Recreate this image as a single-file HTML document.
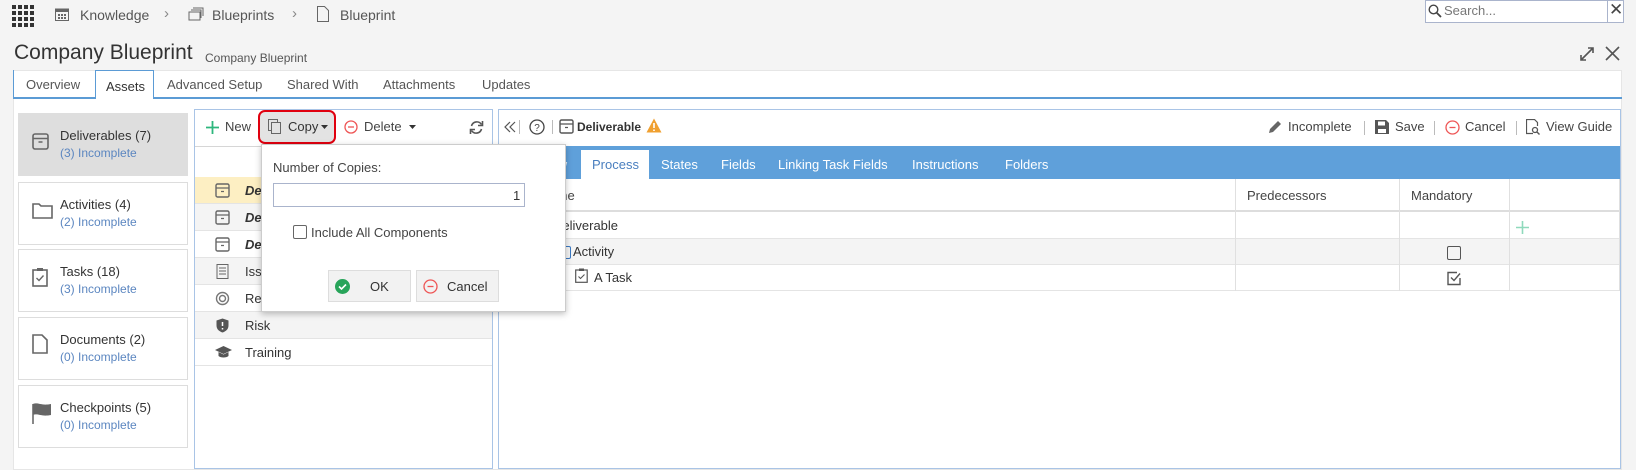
<!DOCTYPE html>
<html><head><meta charset="utf-8"><style>
*{box-sizing:border-box;margin:0;padding:0}
body{width:1636px;height:462px;overflow:hidden;background:#f4f4f4;font-family:"Liberation Sans",sans-serif;font-size:13px;color:#333;position:relative}
.a{position:absolute;white-space:nowrap}
.card{position:absolute;left:18px;width:170px;height:63px;background:#fff;border:1px solid #ddd}
.card .t{position:absolute;left:41px;top:14px;font-size:13px;color:#333}
.card .s{position:absolute;left:41px;top:32px;font-size:12px;color:#5b86c0}
.card svg{position:absolute;left:13px;top:19px}
.row{position:absolute;left:195px;width:297px;height:27px;border-bottom:1px solid #e4e4e4}
.row span{position:absolute;left:50px;top:6px}
.row svg{position:absolute;left:20px;top:6px}
.trow{position:absolute;left:499px;width:1120px;border-bottom:1px solid #e4e4e4}
.vl{position:absolute;width:1px;background:#e0e0e0}
.sep{position:absolute;width:1px;height:14px;background:#bbb}
</style></head><body>
<svg class="a" style="left:12px;top:5px" width="22" height="22"><g fill="#333"><rect x="0" y="0" width="4" height="4"/><rect x="6" y="0" width="4" height="4"/><rect x="12" y="0" width="4" height="4"/><rect x="18" y="0" width="4" height="4"/><rect x="0" y="6" width="4" height="4"/><rect x="6" y="6" width="4" height="4"/><rect x="12" y="6" width="4" height="4"/><rect x="18" y="6" width="4" height="4"/><rect x="0" y="12" width="4" height="4"/><rect x="6" y="12" width="4" height="4"/><rect x="12" y="12" width="4" height="4"/><rect x="18" y="12" width="4" height="4"/><rect x="0" y="18" width="4" height="4"/><rect x="6" y="18" width="4" height="4"/><rect x="12" y="18" width="4" height="4"/><rect x="18" y="18" width="4" height="4"/></g></svg>
<svg class="a" style="left:55px;top:7px" width="14" height="14"><rect x="0.5" y="2" width="13" height="11.5" fill="none" stroke="#666"/><rect x="0.5" y="2" width="13" height="3" fill="#666"/><g fill="#666"><rect x="3" y="7" width="2" height="2"/><rect x="6" y="7" width="2" height="2"/><rect x="9" y="7" width="2" height="2"/><rect x="3" y="10" width="2" height="2"/><rect x="6" y="10" width="2" height="2"/><rect x="9" y="10" width="2" height="2"/></g></svg>
<div class="a" style="left:80px;top:7px;font-size:14px;color:#555">Knowledge</div>
<div class="a" style="left:164px;top:5px;font-size:15px;color:#888">›</div>
<svg class="a" style="left:188px;top:7px" width="16" height="14"><path d="M1 5h11v8H1z M3 3h10v8 M5 1h10v8" fill="none" stroke="#666"/></svg>
<div class="a" style="left:212px;top:7px;font-size:14px;color:#555">Blueprints</div>
<div class="a" style="left:292px;top:5px;font-size:15px;color:#888">›</div>
<svg class="a" style="left:317px;top:6px" width="12" height="16"><path d="M0.5 0.5h7l4 4v11h-11z" fill="none" stroke="#666"/></svg>
<div class="a" style="left:340px;top:7px;font-size:14px;color:#555">Blueprint</div>
<div class="a" style="left:1425px;top:0;width:199px;height:23px;background:#fff;border:1px solid #aab4cc"></div>
<svg class="a" style="left:1428px;top:4px" width="14" height="14"><circle cx="5.5" cy="5.5" r="4.3" fill="none" stroke="#444" stroke-width="1.4"/><path d="M8.7 8.7l4.3 4.3" stroke="#444" stroke-width="1.8"/></svg>
<div class="a" style="left:1444px;top:3px;font-size:13px;color:#777">Search...</div>
<div class="a" style="left:1607px;top:0;width:1px;height:23px;background:#aab4cc"></div>
<div class="a" style="left:1609px;top:0px;font-size:17px;color:#444">✕</div>
<div class="a" style="left:14px;top:41px;font-size:21px;color:#333">Company Blueprint</div>
<div class="a" style="left:205px;top:51px;font-size:12px;color:#555">Company Blueprint</div>
<svg class="a" style="left:1579px;top:46px" width="16" height="16"><path d="M2 14L14 2M9 2h5v5M2 9v5h5" fill="none" stroke="#555" stroke-width="1.6"/></svg>
<svg class="a" style="left:1605px;top:46px" width="15" height="15"><path d="M1 1l13 13M14 1L1 14" stroke="#555" stroke-width="1.6"/></svg>
<div class="a" style="left:13px;top:70px;width:1609px;height:400px;background:#fff;border:1px solid #e6e6e6"></div>
<div class="a" style="left:13px;top:97px;width:1609px;height:1.5px;background:#5b9bd5"></div>
<div class="a" style="left:95px;top:70px;width:59px;height:29px;background:#fff;border:1.5px solid #5b9bd5;border-bottom:none"></div>
<div class="a" style="left:13px;top:70px;width:1px;height:28px;background:#5b9bd5"></div>
<div class="a" style="left:26px;top:77px;font-size:13px;color:#555">Overview</div>
<div class="a" style="left:106px;top:79px;font-size:13px;color:#333">Assets</div>
<div class="a" style="left:167px;top:77px;font-size:13px;color:#555">Advanced Setup</div>
<div class="a" style="left:287px;top:77px;font-size:13px;color:#555">Shared With</div>
<div class="a" style="left:383px;top:77px;font-size:13px;color:#555">Attachments</div>
<div class="a" style="left:482px;top:77px;font-size:13px;color:#555">Updates</div>
<div class="card" style="top:113px;background:#dedede;border-color:#dedede"><svg width="17" height="17"><rect x="1" y="1" width="15" height="15" rx="2" fill="none" stroke="#666" stroke-width="1.6"/><path d="M1 5.5h15M6.5 9h4" stroke="#666" stroke-width="1.5"/></svg><div class="t">Deliverables (7)</div><div class="s">(3) Incomplete</div></div>
<div class="card" style="top:182px"><svg width="21" height="17"><path d="M1 2h6l2 2h11v12H1z" fill="none" stroke="#666" stroke-width="1.6"/></svg><div class="t">Activities (4)</div><div class="s">(2) Incomplete</div></div>
<div class="card" style="top:249px"><svg width="16" height="20" style="top:17px"><rect x="1" y="3" width="14" height="16" fill="none" stroke="#666" stroke-width="1.6"/><rect x="5" y="1" width="6" height="3" fill="#666"/><path d="M4.5 11l2.5 2.5 4.5-5" fill="none" stroke="#666" stroke-width="1.4"/></svg><div class="t">Tasks (18)</div><div class="s">(3) Incomplete</div></div>
<div class="card" style="top:317px"><svg width="16" height="20" style="top:16px"><path d="M1 1h9l5 5v13H1z" fill="none" stroke="#666" stroke-width="1.6"/></svg><div class="t">Documents (2)</div><div class="s">(0) Incomplete</div></div>
<div class="card" style="top:385px"><svg width="20" height="21" style="top:17px"><path d="M1 1v20" stroke="#555" stroke-width="1.4"/><path d="M1 1c5-2 8 2 18 0v11c-10 2-13-2-18 0z" fill="#666"/></svg><div class="t">Checkpoints (5)</div><div class="s">(0) Incomplete</div></div>
<div class="a" style="left:194px;top:109px;width:299px;height:360px;border:1px solid #a9c4e6;background:#fff"></div>
<div class="a" style="left:195px;top:146px;width:297px;height:1px;background:#d6d6d6"></div>
<svg class="a" style="left:206px;top:121px" width="13" height="13"><path d="M6.5 0v13M0 6.5h13" stroke="#2eb67d" stroke-width="1.8"/></svg>
<div class="a" style="left:225px;top:119px;color:#444">New</div>
<div class="a" style="left:258px;top:110px;width:78px;height:34px;background:#e3e3e3;border:2px solid #e0000f;border-radius:7px"></div>
<svg class="a" style="left:268px;top:119px" width="13" height="15"><rect x="0.5" y="0.5" width="9" height="11" fill="none" stroke="#666"/><rect x="3.5" y="3.5" width="9" height="11" fill="#e3e3e3" stroke="#666"/></svg>
<div class="a" style="left:288px;top:119px;color:#333">Copy</div>
<svg class="a" style="left:321px;top:125px" width="7" height="4"><path d="M0 0h7L3.5 4z" fill="#333"/></svg>
<svg class="a" style="left:344px;top:120px" width="14" height="14"><circle cx="7" cy="7" r="6" fill="none" stroke="#e55" stroke-width="1.3"/><path d="M4 7h6" stroke="#e55" stroke-width="1.3"/></svg>
<div class="a" style="left:364px;top:119px;color:#444">Delete</div>
<svg class="a" style="left:409px;top:125px" width="7" height="4"><path d="M0 0h7L3.5 4z" fill="#333"/></svg>
<svg class="a" style="left:469px;top:120px" width="15" height="15"><path d="M2.5 6A5.5 5.5 0 0 1 12.5 4.5M12.5 9A5.5 5.5 0 0 1 2.5 10.5" fill="none" stroke="#555" stroke-width="1.6"/><path d="M13.5 1v4.5H9M1.5 14V9.5H6" fill="none" stroke="#555" stroke-width="1.6"/></svg>
<div class="row" style="top:177px;background:#fdefc3"><svg width="15" height="15"><rect x="1" y="1" width="13" height="13" rx="1.5" fill="none" stroke="#666" stroke-width="1.4"/><path d="M1 5h13M6 8.5h3" stroke="#666" stroke-width="1.3"/></svg><span style="font-style:italic;font-weight:bold">Deliverable</span></div>
<div class="row" style="top:204px;background:#f4f4f4"><svg width="15" height="15"><rect x="1" y="1" width="13" height="13" rx="1.5" fill="none" stroke="#666" stroke-width="1.4"/><path d="M1 5h13M6 8.5h3" stroke="#666" stroke-width="1.3"/></svg><span style="font-style:italic;font-weight:bold">Deliverable</span></div>
<div class="row" style="top:231px"><svg width="15" height="15"><rect x="1" y="1" width="13" height="13" rx="1.5" fill="none" stroke="#666" stroke-width="1.4"/><path d="M1 5h13M6 8.5h3" stroke="#666" stroke-width="1.3"/></svg><span style="font-style:italic;font-weight:bold">Deliverable</span></div>
<div class="row" style="top:258px;background:#f4f4f4"><svg width="15" height="15"><rect x="2" y="0.5" width="11" height="14" fill="none" stroke="#666"/><path d="M4 4h7M4 7h7M4 10h7" stroke="#666"/></svg><span>Issue</span></div>
<div class="row" style="top:285px"><svg width="15" height="15"><circle cx="7.5" cy="7.5" r="6" fill="none" stroke="#777" stroke-width="1.4"/><circle cx="7.5" cy="7.5" r="3" fill="none" stroke="#777" stroke-width="1.4"/></svg><span>Requirement</span></div>
<div class="row" style="top:312px;background:#f4f4f4"><svg width="15" height="15"><path d="M7.5 0.5l6 2v5c0 4-3 6-6 7-3-1-6-3-6-7v-5z" fill="#555"/><path d="M7.5 4v4M7.5 10v1.5" stroke="#fff" stroke-width="1.5"/></svg><span>Risk</span></div>
<div class="row" style="top:339px"><svg width="17" height="15"><path d="M0 5l8.5-4 8.5 4-8.5 4z" fill="#555"/><path d="M3.5 7v4c2 2 8 2 10 0V7l-5 2.5z" fill="#555"/></svg><span>Training</span></div>
<div class="a" style="left:498px;top:109px;width:1123px;height:360px;border:1px solid #a9c4e6;background:#fff"></div>
<svg class="a" style="left:504px;top:121px" width="12" height="12"><path d="M6 1L1 6l5 5M11 1L6 6l5 5" fill="none" stroke="#555" stroke-width="1.2"/></svg>
<div class="sep" style="left:519px;top:120px"></div>
<svg class="a" style="left:529px;top:119px" width="16" height="16"><circle cx="8" cy="8" r="7" fill="none" stroke="#444" stroke-width="1.3"/><text x="8" y="12" font-size="10" text-anchor="middle" fill="#444" font-family="Liberation Sans">?</text></svg>
<div class="sep" style="left:552px;top:120px"></div>
<svg class="a" style="left:559px;top:119px" width="15" height="15"><rect x="1" y="1" width="13" height="13" rx="1.5" fill="none" stroke="#555" stroke-width="1.4"/><path d="M1 5h13M6 8.5h3" stroke="#555" stroke-width="1.3"/></svg>
<div class="a" style="left:577px;top:120px;font-size:12px;font-weight:bold;color:#333">Deliverable</div>
<svg class="a" style="left:646px;top:118px" width="16" height="15"><path d="M8 0.5l7.5 14H0.5z" fill="#f0a030"/><path d="M8 5v5M8 11.5v1.5" stroke="#fff" stroke-width="1.6"/></svg>
<svg class="a" style="left:1267px;top:119px" width="16" height="16"><path d="M2 14l1-4 8-8 3 3-8 8z" fill="#666"/></svg>
<div class="a" style="left:1288px;top:119px;color:#444">Incomplete</div>
<div class="sep" style="left:1364px;top:121px"></div>
<svg class="a" style="left:1375px;top:120px" width="14" height="14"><path d="M0 0h11l3 3v11H0z" fill="#555"/><rect x="3" y="1.5" width="7" height="4" fill="#fff"/><rect x="3" y="9" width="8" height="4" fill="#fff"/></svg>
<div class="a" style="left:1395px;top:119px;color:#444">Save</div>
<div class="sep" style="left:1434px;top:121px"></div>
<svg class="a" style="left:1445px;top:120px" width="15" height="15"><circle cx="7.5" cy="7.5" r="6.5" fill="none" stroke="#e55" stroke-width="1.3"/><path d="M4.5 7.5h6" stroke="#e55" stroke-width="1.3"/></svg>
<div class="a" style="left:1465px;top:119px;color:#444">Cancel</div>
<div class="sep" style="left:1516px;top:121px"></div>
<svg class="a" style="left:1526px;top:119px" width="15" height="16"><path d="M7 14.5H0.5V0.5h8l3 3V7" fill="none" stroke="#555" stroke-width="1.2"/><circle cx="9" cy="11" r="2.5" fill="none" stroke="#555" stroke-width="1.3"/><path d="M11 13l2.5 2.5" stroke="#555" stroke-width="1.4"/></svg>
<div class="a" style="left:1546px;top:119px;color:#444">View Guide</div>
<div class="a" style="left:499px;top:146px;width:1121px;height:33px;background:#5fa0da"></div>
<div class="a" style="left:581px;top:150px;width:68px;height:29px;background:#fff"></div>
<div class="a" style="left:513px;top:157px;color:#e7f0fa">Overview</div>
<div class="a" style="left:592px;top:157px;color:#4a7fbf;font-size:13px">Process</div>
<div class="a" style="left:661px;top:157px;color:#fff">States</div>
<div class="a" style="left:721px;top:157px;color:#fff">Fields</div>
<div class="a" style="left:778px;top:157px;color:#fff">Linking Task Fields</div>
<div class="a" style="left:912px;top:157px;color:#fff">Instructions</div>
<div class="a" style="left:1005px;top:157px;color:#fff">Folders</div>
<div class="a" style="left:499px;top:179px;width:1120px;height:33px;border-bottom:2px solid #ddd"></div>
<div class="a" style="left:540px;top:188px;color:#444">Name</div>
<div class="a" style="left:1247px;top:188px;color:#444">Predecessors</div>
<div class="a" style="left:1411px;top:188px;color:#444">Mandatory</div>
<div class="trow" style="top:212px;height:27px"></div>
<div class="trow" style="top:239px;height:26px;background:#f4f4f4"></div>
<div class="trow" style="top:265px;height:26px"></div>
<div class="vl" style="left:1235px;top:179px;height:112px"></div>
<div class="vl" style="left:1399px;top:179px;height:112px"></div>
<div class="vl" style="left:1509px;top:179px;height:112px"></div>
<div class="vl" style="left:1619px;top:179px;height:112px"></div>
<div class="a" style="left:553px;top:218px;color:#333">Deliverable</div>
<div class="a" style="left:560px;top:246px;width:11px;height:13px;border:1.3px solid #3a78c2;border-radius:2px"></div>
<div class="a" style="left:573px;top:244px;color:#333">Activity</div>
<svg class="a" style="left:575px;top:268px" width="13" height="15"><rect x="0.7" y="2" width="11.5" height="12.3" fill="none" stroke="#555" stroke-width="1.2"/><rect x="4" y="0.5" width="5" height="2.5" fill="#555"/><path d="M3.5 8.5l2 2 4-4" fill="none" stroke="#555" stroke-width="1.1"/></svg>
<div class="a" style="left:594px;top:270px;color:#333">A Task</div>
<svg class="a" style="left:1516px;top:221px" width="13" height="13"><path d="M6.5 0v13M0 6.5h13" stroke="#8fd9bc" stroke-width="1.6"/></svg>
<div class="a" style="left:1447px;top:246px;width:14px;height:14px;border:1.5px solid #555;border-radius:2px"></div>
<svg class="a" style="left:1447px;top:271px" width="15" height="15"><path d="M13 7v6.5H1V1.5h9" fill="none" stroke="#555" stroke-width="1.4"/><path d="M4 6.5l3 3 6-7" fill="none" stroke="#555" stroke-width="1.4"/></svg>
<div class="a" style="left:261px;top:144px;width:305px;height:168px;background:#fff;border:1px solid #ccc;box-shadow:0 2px 6px rgba(0,0,0,0.25)"></div>
<div class="a" style="left:273px;top:160px;color:#444">Number of Copies:</div>
<div class="a" style="left:273px;top:183px;width:252px;height:24px;border:1px solid #aab4cc;background:#fff"></div>
<div class="a" style="left:513px;top:188px;color:#333">1</div>
<div class="a" style="left:293px;top:225px;width:14px;height:14px;border:1.5px solid #666;border-radius:2px"></div>
<div class="a" style="left:311px;top:225px;color:#444">Include All Components</div>
<div class="a" style="left:328px;top:270px;width:83px;height:32px;background:#f2f2f2;border:1px solid #ddd"></div>
<svg class="a" style="left:335px;top:279px" width="15" height="15"><circle cx="7.5" cy="7.5" r="7.5" fill="#28a45a"/><path d="M4 7.5l2.5 2.5 4.5-4.5" fill="none" stroke="#fff" stroke-width="1.6"/></svg>
<div class="a" style="left:370px;top:279px;color:#333">OK</div>
<div class="a" style="left:416px;top:270px;width:83px;height:32px;background:#f2f2f2;border:1px solid #ddd"></div>
<svg class="a" style="left:423px;top:279px" width="15" height="15"><circle cx="7.5" cy="7.5" r="6.5" fill="none" stroke="#e55" stroke-width="1.3"/><path d="M4.5 7.5h6" stroke="#e55" stroke-width="1.3"/></svg>
<div class="a" style="left:447px;top:279px;color:#333">Cancel</div>
</body></html>
